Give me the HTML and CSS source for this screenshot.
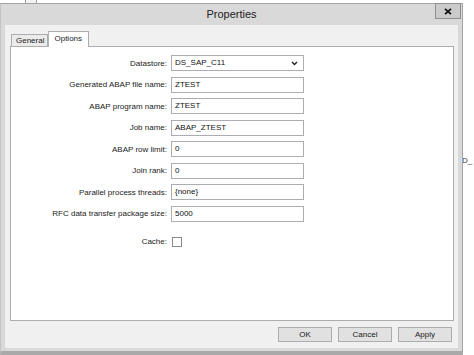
FILE: index.html
```html
<!DOCTYPE html>
<html lang="en">
<head>
  <meta charset="UTF-8">
  <title>Properties</title>
  <link rel="stylesheet" href="styles.css">
</head>
<body>

<!-- bits of the windows behind the dialog -->
<div class="behind-box"></div>
<div class="behind-text">D_</div>

<div class="window">
  <div class="titlebar">
    <span></span>
    <span class="title">Properties</span>
    <button class="close" title="Close">
      <svg width="8" height="7" viewBox="0 0 8 7"><path d="M1 0.8 L7 6.2 M7 0.8 L1 6.2" stroke="#111" stroke-width="1.8" fill="none"/></svg>
    </button>
  </div>

  <div class="client">
    <div class="tabs">
      <div class="tab">General</div>
      <div class="tab active">Options</div>
    </div>

    <div class="panel">
      <div class="form">
        <label>Datastore:</label>
        <div class="field select">
          <span>DS_SAP_C11</span>
          <svg width="7" height="5" viewBox="0 0 7 5"><path d="M1 1 L3.5 3.6 L6 1" stroke="#222" stroke-width="1.4" fill="none"/></svg>
        </div>

        <label>Generated ABAP file name:</label>
        <div class="field">ZTEST</div>

        <label>ABAP program name:</label>
        <div class="field">ZTEST</div>

        <label>Job name:</label>
        <div class="field">ABAP_ZTEST</div>

        <label>ABAP row limit:</label>
        <div class="field">0</div>

        <label>Join rank:</label>
        <div class="field">0</div>

        <label>Parallel process threads:</label>
        <div class="field">{none}</div>

        <label>RFC data transfer package size:</label>
        <div class="field">5000</div>

        <label class="cache">Cache:</label>
        <div class="cache"><span class="checkbox"></span></div>
      </div>
    </div>

    <div class="buttons">
      <button class="btn">OK</button>
      <button class="btn">Cancel</button>
      <button class="btn">Apply</button>
    </div>
  </div>
</div>

</body>
</html>
```

FILE: styles.css
```css
body {
  margin: 0;
  width: 474px;
  height: 355px;
  overflow: hidden;
  position: relative;
  background: #fff;
  font-family: "Liberation Sans", Arial, sans-serif;
  font-size: 8px;
  color: #1a1a1a;
}
.behind-box {
  position: absolute;
  left: 25px;
  top: -3px;
  width: 10px;
  height: 5px;
  border: 1px solid #a0a0a0;
  background: #f2f2f2;
}
.behind-text {
  position: absolute;
  left: 462px;
  top: 156px;
  font-size: 8px;
  color: #333;
}
.window {
  position: relative;
  box-sizing: border-box;
  width: 463px;
  height: 352px;
  margin-top: 3px;
  padding: 0 4px 3px 4px;
  background: #d9d9d9;
  border: 1px solid #a4a4a4;
  border-left-color: #c4c4c4;
  border-bottom: 4px solid #a9a9a9;
}
.titlebar {
  display: grid;
  grid-template-columns: 1fr auto 1fr;
  height: 21px;
  margin: 0 -4px;
}
.title {
  font-size: 11px;
  line-height: 21px;
  color: #222;
}
.close {
  justify-self: end;
  align-self: start;
  box-sizing: border-box;
  width: 26px;
  height: 16px;
  margin: -1px 1px 0 0;
  padding: 0;
  border: 1px solid #8f8f8f;
  background: #cbcbcb;
  display: flex;
  align-items: center;
  justify-content: center;
}
.client {
  box-sizing: border-box;
  height: 323px;
  padding: 6px 4px 6px 5px;
  background: #f0f0f0;
}
.tabs {
  display: flex;
  align-items: flex-end;
  height: 15px;
  padding-left: 1px;
}
.tab {
  box-sizing: border-box;
  height: 12px;
  padding: 0 3px 0 4px;
  line-height: 11px;
  border: 1px solid #acacac;
  border-bottom: none;
  background: #ebebeb;
}
.tab.active {
  position: relative;
  z-index: 1;
  height: 16px;
  margin-bottom: -1px;
  padding: 0 6px 0 5px;
  line-height: 13px;
  background: #fff;
  border-left-color: #b4b4b4;
}
.panel {
  box-sizing: border-box;
  height: 275px;
  padding-top: 8px;
  border: 1px solid #adadad;
  background: #fff;
}
.form {
  display: grid;
  grid-template-columns: 156px 133px;
  column-gap: 4px;
  row-gap: 5.5px;
  align-items: center;
}
.form label {
  text-align: right;
  white-space: nowrap;
}
.field {
  box-sizing: border-box;
  height: 16px;
  padding-left: 3px;
  line-height: 14px;
  border: 1px solid #abadb3;
  background: #fff;
  color: #111;
}
.select {
  display: flex;
  align-items: center;
  justify-content: space-between;
  padding-right: 5px;
}
.cache {
  margin-top: 9.5px;
  height: 10px;
  line-height: 10px;
}
.checkbox {
  display: block;
  box-sizing: border-box;
  width: 10px;
  height: 10px;
  margin-left: 1px;
  border: 1px solid #8a8a8a;
  background: #fff;
}
.buttons {
  display: flex;
  justify-content: flex-end;
  gap: 6px;
  margin-top: 6px;
  padding-right: 2px;
}
.btn {
  box-sizing: border-box;
  width: 54px;
  height: 15px;
  padding: 0;
  border: 1px solid #adadad;
  background: #e1e1e1;
  font-family: inherit;
  font-size: 8px;
  color: #1a1a1a;
}
```
